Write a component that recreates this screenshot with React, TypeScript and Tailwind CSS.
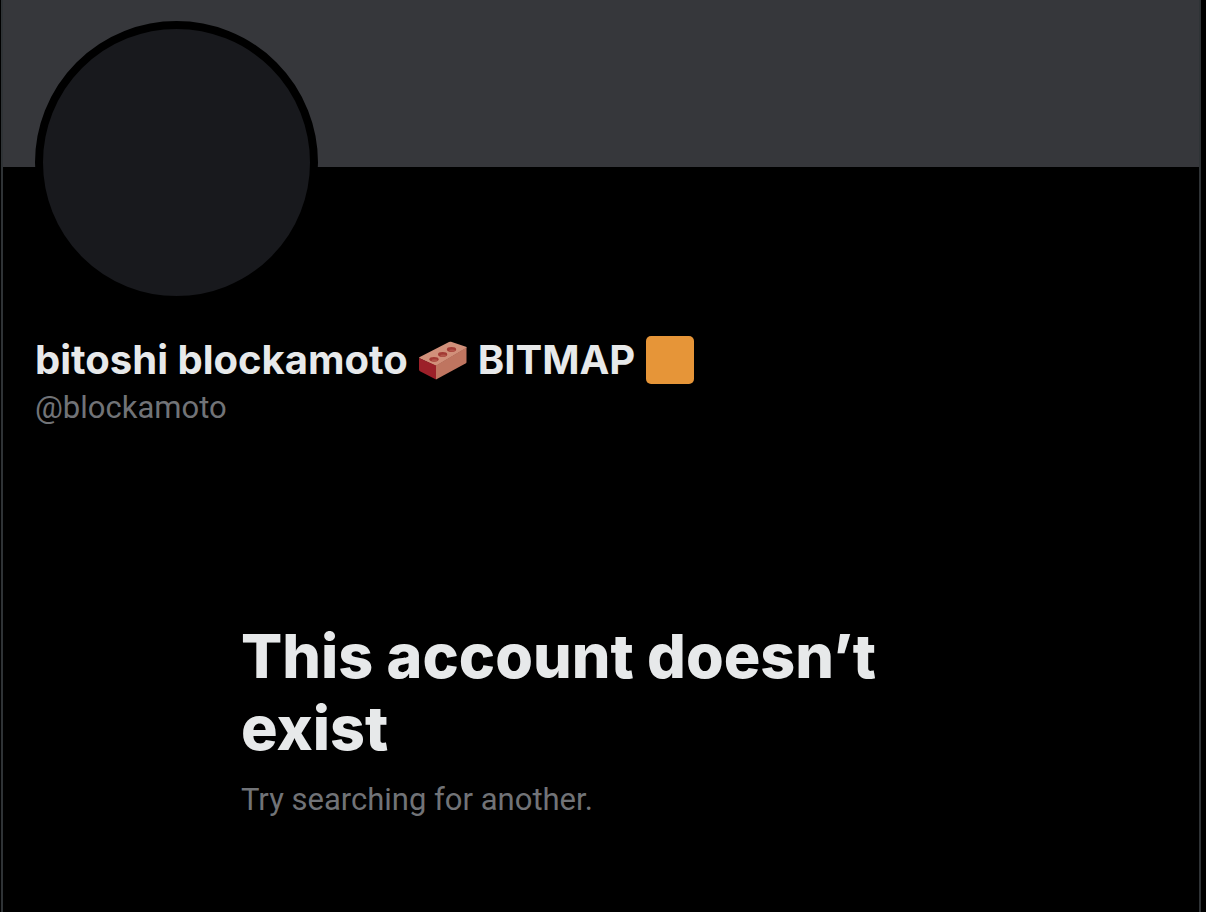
function Brick() {
  return (
    <svg viewBox="0 0 48 48" className="h-12 w-12 shrink-0" role="img" aria-label="brick">
      <path d="M0 22Q0 21.300 .8 21L30 6Q31 5.500 32 5.800L47 10.800Q48 11.200 47.500 12L17 30Z" fill="#d1907a" />
      <path d="M17 29.500 47.500 11.500V26Q47.500 27 46.500 27.600L17 43.500Z" fill="#bf7560" />
      <path d="M0 22 17 29.500V43.500L1 35.200Q0 34.700 0 33.500Z" fill="#9c2029" />
      <g fill="#a33a34">
        <ellipse cx="15" cy="23.300" rx="4.600" ry="2.400" />
        <ellipse cx="23.600" cy="18.400" rx="4.600" ry="2.400" />
        <ellipse cx="32.500" cy="13.500" rx="4.600" ry="2.400" />
      </g>
      <g fill="#b3564a">
        <ellipse cx="15.600" cy="24.400" rx="3" ry="1.100" />
        <ellipse cx="24.200" cy="19.500" rx="3" ry="1.100" />
        <ellipse cx="33.100" cy="14.600" rx="3" ry="1.100" />
      </g>
    </svg>
  )
}

function OrangeSquare() {
  return (
    <svg viewBox="0 0 48 48" className="h-12 w-12 shrink-0" role="img" aria-label="orange square">
      <rect width="48" height="48" rx="5" fill="#e69538" />
    </svg>
  )
}

export default function App() {
  return (
    <div className="min-h-screen bg-black pl-px pr-[5px] font-['Roboto','Liberation_Sans',sans-serif] flex">
      <main className="flex-1 border-x-2 border-[#2f3336]">
        <div className="h-[167px] bg-[#36373b]" />

        <section className="px-8">
          <div className="-mt-[146px] h-[283px] w-[283px] rounded-full border-8 border-black bg-[#18191d]" />
          <h1 className="mt-8 flex h-12 items-center gap-[11px] font-['Inter','Liberation_Sans',sans-serif] text-[40px] leading-[48px] font-bold text-[#e7e9ea]">
            <span>bitoshi blockamoto</span>
            <Brick />
            <span>BITMAP</span>
            <OrangeSquare />
          </h1>
          <p className="mt-1 text-[31px] leading-10 text-[#717377]">@blockamoto</p>
        </section>

        <section className="mx-auto mt-48 max-w-[720px] pb-16">
          <h2 className="font-['Inter','Liberation_Sans',sans-serif] text-[61px] leading-[72px] font-extrabold text-[#e7e9ea]">
            This account doesn’t exist
          </h2>
          <p className="mt-4 text-[31px] leading-10 text-[#717377]">Try searching for another.</p>
        </section>
      </main>
    </div>
  )
}
